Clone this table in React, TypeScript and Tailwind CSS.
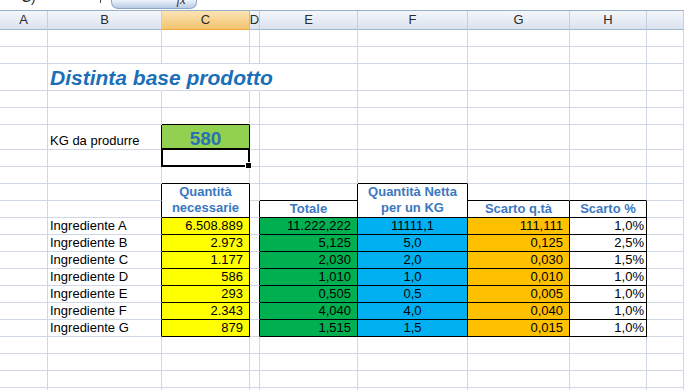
import React from 'react';
import clsx from 'clsx';

type Align = 'l' | 'r' | 'c';

type Cell = {
  t?: React.ReactNode;
  a?: Align;
  box?: boolean;
  span?: boolean;
  covered?: boolean;
  fill?: string;
  tone?: string;
  pad?: string;
  sel?: boolean;
  hideR?: boolean;
};

const FONT = "font-['Liberation_Sans',Arial,sans-serif]";

const COLS = ['A', 'B', 'C', 'D', 'E', 'F', 'G', 'H', ''];

const blank = (n = 9): Cell[] => Array.from({ length: n }, () => ({}));

const headBlue = 'text-[#3a78bf] font-bold';

const ingredients: [string, string, string, string, string, string][] = [
  ['Ingrediente A', '6.508.889', '11.222,222', '11111,1', '111,111', '1,0%'],
  ['Ingrediente B', '2.973', '5,125', '5,0', '0,125', '2,5%'],
  ['Ingrediente C', '1.177', '2,030', '2,0', '0,030', '1,5%'],
  ['Ingrediente D', '586', '1,010', '1,0', '0,010', '1,0%'],
  ['Ingrediente E', '293', '0,505', '0,5', '0,005', '1,0%'],
  ['Ingrediente F', '2.343', '4,040', '4,0', '0,040', '1,0%'],
  ['Ingrediente G', '879', '1,515', '1,5', '0,015', '1,0%'],
];

type Row = { h: string; cells: Cell[] };

function buildRows(): Row[] {
  const rows: Row[] = [];
  rows.push({ h: 'h-[17px]', cells: blank() });
  rows.push({ h: 'h-[17px]', cells: blank() });

  const title = blank();
  title[1] = {
    t: 'Distinta base prodotto',
    a: 'l',
    tone: 'text-[21px] leading-[24px] font-bold italic text-[#1a6fb8]',
    hideR: true,
  };
  title[2] = { hideR: true };
  title[3] = { hideR: true };
  rows.push({ h: 'h-[27px]', cells: title });

  rows.push({ h: 'h-[17px]', cells: blank() });
  rows.push({ h: 'h-[17px]', cells: blank() });

  const kg = blank();
  kg[1] = { t: 'KG da produrre', a: 'l' };
  kg[2] = {
    t: '580',
    a: 'c',
    box: true,
    fill: 'bg-[#92d050]',
    tone: 'text-[19px] leading-[21px] font-bold text-[#2a70b4]',
  };
  rows.push({ h: 'h-[25px]', cells: kg });

  const sel = blank();
  sel[2] = { sel: true };
  rows.push({ h: 'h-[17px]', cells: sel });

  rows.push({ h: 'h-[17px]', cells: blank() });

  const h1 = blank();
  h1[2] = {
    t: (
      <>
        Quantità
        <br />
        necessarie
      </>
    ),
    a: 'c',
    box: true,
    span: true,
    fill: 'bg-white',
    tone: headBlue,
  };
  h1[5] = {
    t: (
      <>
        Quantità Netta
        <br />
        per un KG
      </>
    ),
    a: 'c',
    box: true,
    span: true,
    fill: 'bg-white',
    tone: headBlue,
  };
  rows.push({ h: 'h-[17px]', cells: h1 });

  const h2 = blank();
  h2[2] = { covered: true, box: true };
  h2[5] = { covered: true, box: true };
  h2[4] = { t: 'Totale', a: 'c', box: true, fill: 'bg-white', tone: headBlue };
  h2[6] = { t: 'Scarto q.tà', a: 'c', box: true, fill: 'bg-white', tone: headBlue };
  h2[7] = { t: 'Scarto %', a: 'c', box: true, fill: 'bg-white', tone: headBlue };
  rows.push({ h: 'h-[17px]', cells: h2 });

  for (const [name, qty, tot, net, sc, pct] of ingredients) {
    const r = blank();
    r[1] = { t: name, a: 'l' };
    r[2] = { t: qty, a: 'r', box: true, fill: 'bg-[#ffff00]', pad: 'pr-[6px]' };
    r[4] = { t: tot, a: 'r', box: true, fill: 'bg-[#00b050]', pad: 'pr-[6px]' };
    r[5] = { t: net, a: 'c', box: true, fill: 'bg-[#00b0f0]' };
    r[6] = { t: sc, a: 'r', box: true, fill: 'bg-[#ffc000]', pad: 'pr-[6px]' };
    r[7] = { t: pct, a: 'r', box: true, fill: 'bg-white', pad: 'pr-[2px]' };
    rows.push({ h: 'h-[17px]', cells: r });
  }

  for (let i = 0; i < 4; i++) rows.push({ h: 'h-[17px]', cells: blank() });
  return rows;
}

const ROWS = buildRows();

function boxed(r: number, c: number): boolean {
  const row = ROWS[r];
  if (!row) return false;
  const cell = row.cells[c];
  return !!cell && !!cell.box;
}

// Lower edge of the name box and formula bar, scrolled partly out of view
function TopStrip() {
  return (
    <div className="flex h-[10px] items-start overflow-hidden bg-white">
      <span className={clsx(FONT, 'ml-[21px] mt-[-11px] text-[14px] leading-[16px] text-[#222]')}>
        C)
      </span>
      <span className="ml-[64px] block h-[3px] w-px bg-[#444]" />
      <div className="ml-[10px] flex h-[9px] w-[86px] items-end justify-end overflow-hidden rounded-b-[7px] border border-t-0 border-[#8ea6c6] bg-gradient-to-b from-[#eef3fa] to-[#b9cbe3] pr-[10px]">
        <span className="mb-[1px] font-['Liberation_Serif',serif] text-[13px] italic leading-[14px] text-[#333]">
          fx
        </span>
      </div>
    </div>
  );
}

const GRID = 'grid grid-cols-[48px_114px_88px_10px_98px_110px_102px_77px_1fr]';

function HeaderRow() {
  return (
    <div className={clsx(GRID, 'border-t border-t-[#9aafc8]')}>
      {COLS.map((c, i) => (
        <div
          key={i}
          className={clsx(
            FONT,
            'flex h-[19px] items-center justify-center border-b border-r text-[13px] leading-[18px] text-[#2b2b2b]',
            c === 'C'
              ? 'bg-gradient-to-b from-[#fbe3b4] to-[#f3c46c] border-b-[#f0a443] border-r-[#e6b86a]'
              : 'bg-gradient-to-b from-[#f4f7fb] to-[#dae3ef] border-b-[#9eb6ce] border-r-[#c3d0e0]'
          )}
        >
          {c}
        </div>
      ))}
    </div>
  );
}

function Sheet() {
  return (
    <div className={GRID}>
      {ROWS.map((row, r) =>
        row.cells.map((cell, c) => {
          if (cell.covered) return null;
          const rightBlack = boxed(r, c) || boxed(r, c + 1);
          const bottomBlack = cell.span ? true : boxed(r, c) || boxed(r + 1, c);
          return (
            <div
              key={`${r}-${c}`}
              className={clsx(
                FONT,
                'relative flex min-w-0 items-end whitespace-nowrap border-b border-r text-[13px] leading-[16px] text-black',
                cell.span ? 'row-span-2' : row.h,
                rightBlack
                  ? 'border-r-black'
                  : cell.hideR
                    ? 'border-r-white'
                    : 'border-r-[#d0d7e5]',
                bottomBlack ? 'border-b-black' : 'border-b-[#d0d7e5]',
                cell.fill,
                cell.a === 'r' && 'justify-end',
                cell.a === 'c' && 'justify-center text-center',
                cell.a === 'l' && 'justify-start pl-[2px]',
                cell.pad,
                cell.span && 'pb-[1px]'
              )}
            >
              {cell.t !== undefined && <span className={clsx('relative z-10', cell.tone)}>{cell.t}</span>}
              {cell.sel && (
                <div className="absolute -left-px -top-[2px] -right-px -bottom-px z-20 border-2 border-black">
                  <div className="absolute -right-[4px] -bottom-[4px] h-[7px] w-[7px] border border-white bg-black" />
                </div>
              )}
            </div>
          );
        })
      )}
    </div>
  );
}

export default function App() {
  return (
    <div className="h-[390px] w-[684px] overflow-hidden bg-white">
      <TopStrip />
      <HeaderRow />
      <Sheet />
    </div>
  );
}
